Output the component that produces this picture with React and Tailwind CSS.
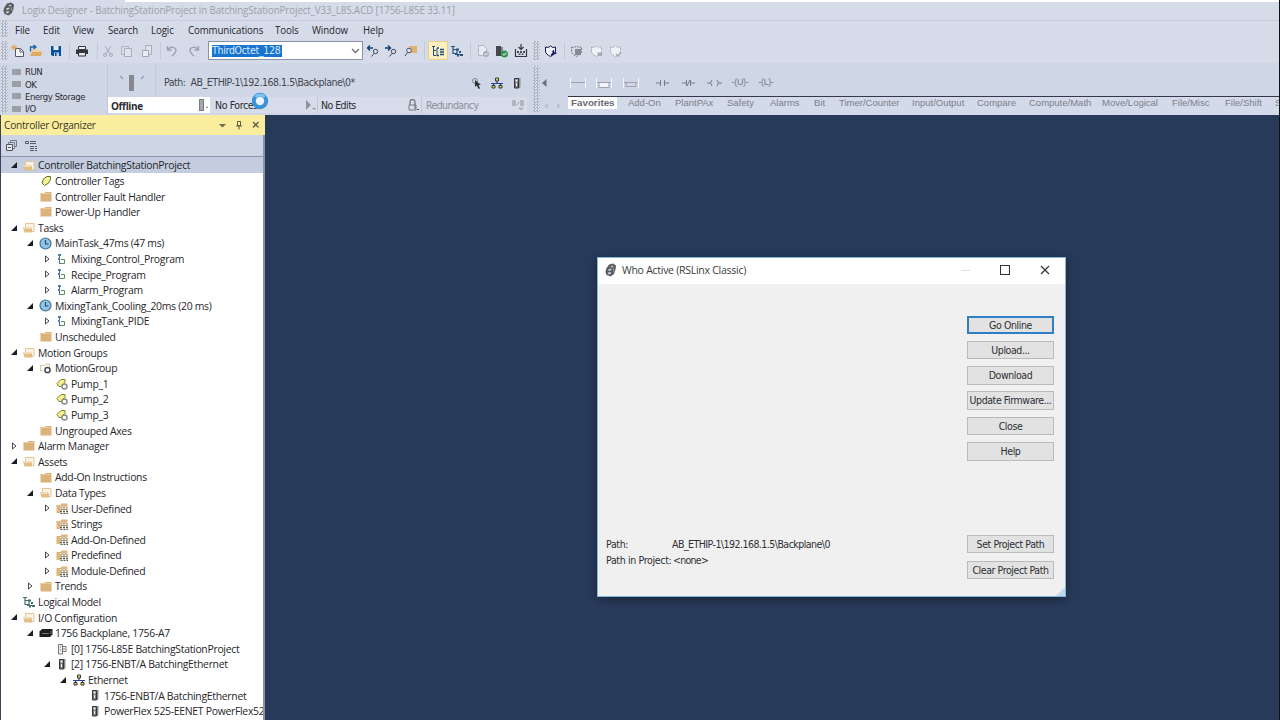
// App.jsx
import React from 'react';

const Svg = ({ w = 14, h = 14, children, className = '' }) => (
  <svg width={w} height={h} viewBox={`0 0 ${w} ${h}`} fill="none" className={`shrink-0 ${className}`}>{children}</svg>
);

// ---- toolbar icons ----
const NewIcon = () => (
  <Svg><path d="M4.500 4.500h5l3 3v5h-8z" fill="#f4f6fa" stroke="#555b66" /><path d="M9 4.500v3.500h3.500" stroke="#555b66" /><path d="M3 .5v6M0 3.500h6M1 1.500l4 4M5 1.500l-4 4" stroke="#e2a54e" /></Svg>
);
const OpenIcon = () => (
  <Svg><path d="M3 5h4l1 1h4v6H3z" fill="#f0cf9c" /><path d="M1 12l2-4h10l-1 4z" fill="#dfa962" /><path d="M1.500 7.500V3h5M4.500 1l2.500 2-2.500 2" stroke="#1d5fa5" strokeWidth="1.300" /></Svg>
);
const SaveIcon = () => (
  <Svg><path d="M2 2h10v10H3.500L2 10.500z" fill="#0b4f96" /><path d="M4.500 2h5v4h-5z" fill="#e4eaf5" /><path d="M5 8.500h5V12H5z" fill="#bfd0e6" /><path d="M6 9h1.500v3H6z" fill="#0b4f96" /></Svg>
);
const PrintIcon = () => (
  <Svg><path d="M3.500 2.500h7v3h-7z" fill="#eef" stroke="#333" /><path d="M1 5.500h12V10H1z" fill="#30343c" /><path d="M3.500 8.500h7v3.500h-7z" fill="#dfe3ec" stroke="#333" /></Svg>
);
const CutIcon = () => (
  <Svg><path d="M4 2l5 8M10 2L5 10" stroke="#a6abb8" /><circle cx="4" cy="11" r="1.500" stroke="#a6abb8" /><circle cx="10" cy="11" r="1.500" stroke="#a6abb8" /></Svg>
);
const CopyIcon = () => (
  <Svg><path d="M1.500 2.500h7v8h-7z" stroke="#b0b5c2" /><path d="M4.500 4.500h7v8h-7z" fill="#dfe3ed" stroke="#a9aebb" /></Svg>
);
const PasteIcon = () => (
  <Svg><path d="M5.500 1.500h6v9h-6z" fill="#dde1ec" stroke="#a9aebb" /><path d="M2.500 6.500h6v6h-6z" fill="#e9ecf4" stroke="#a0a5b2" /></Svg>
);
const UndoIcon = ({ flip }) => (
  <Svg className={flip ? '-scale-x-100' : ''}><path d="M2.500 2v4h4M3 5.500C5.500 2 11 3 11 6.500c0 2.500-2 3.500-4 5.500" stroke="#9da2b1" strokeWidth="1.400" /></Svg>
);
const FindIcon = ({ next }) => (
  <Svg w={12}><path d={next ? 'M0 4h5M3 1.500L5.500 4 3 6.500' : 'M6 4H1M3 1.500L.5 4 3 6.500'} stroke="#10406f" strokeWidth="1.400" /><circle cx="8.500" cy="7.500" r="2.200" stroke="#3b4756" /><path d="M7 9.500l-2.500 3" stroke="#3b4756" /></Svg>
);
const FindAllIcon = () => (
  <Svg><path d="M5 2h8v7H5z" fill="#e3b06f" /><circle cx="5" cy="6.500" r="2.300" fill="#dde2ee" stroke="#43566f" /><path d="M3.500 8.500L1 12" stroke="#43566f" /></Svg>
);
const OrganizerIcon = () => (
  <Svg><path d="M1 2.500h3M2.500 2.500v9H5M2.500 6.500H5M6 4v8" stroke="#1d4f7c" /><path d="M6 4h2M6 11.500h2M9 5.500h4M9 8h4M9 10.500h4" stroke="#1d4f7c" strokeWidth="1.300" /></Svg>
);
const TreeIcon = ({ color = '#28517d' }) => (
  <Svg w={12} h={12}><path d="M0 1.500h4M2 1.500v7h3M2 4.500h4M6 4.500v5h4" stroke={color} strokeWidth="1.200" /><path d="M5 3.500h3v2H5zM4 8h2v2H4zM8 6h2v2H8zM9 9h3v2H9zM6 10h2v1.500H6z" fill={color} /></Svg>
);
const VerifyIcon = () => (
  <Svg><path d="M2.500 1.500h5l3 3v7h-8z" fill="#e8ebf3" stroke="#b2b7c3" /><circle cx="10" cy="10" r="3" fill="#a8aeb8" /><path d="M8.500 10l1 1 2-2.200" stroke="#fff" /></Svg>
);
const VerifyCtlIcon = () => (
  <Svg><path d="M1 2h5v10H1z" fill="#41474a" /><path d="M6 3h2v9H6z" fill="#7d8784" /><circle cx="9.500" cy="10" r="3.500" fill="#2f9550" /><path d="M7.800 10l1.200 1.300 2.300-2.500" stroke="#fff" /></Svg>
);
const BuildIcon = () => (
  <Svg><path d="M1.500 5v7.500h11V5" stroke="#333842" strokeWidth="1.200" /><path d="M7 0v5M4.500 3L7 5.500 9.500 3" stroke="#333842" strokeWidth="1.200" /><path d="M3 7h2v2H3zM6 7h2v2H6zM9 7h2v2H9zM4.500 9.500h2v1.500h-2zM7.500 9.500h2v1.500h-2z" fill="#4b515b" /></Svg>
);
const ShieldIcon = ({ stroke, fill = '#eef1f8', badge }) => (
  <Svg><path d="M1.500 3L4 3.500 6.500 2 9 3.500 11.500 3v4c0 3-2.500 4-5 5.500C4 11 1.500 10 1.500 7z" fill={fill} stroke={stroke} strokeDasharray={badge === 'key' ? undefined : '2 1'} />
    {badge === 'key' && <path d="M7 11.500l3-3M10 6.500a1.500 1.500 0 102 2" stroke="#11136a" strokeWidth="1.700" />}
    {badge === 'paste' && <path d="M5 5h6v6H5z" fill="#858a95" />}
    {badge === 'lock' && <path d="M7.500 8.500h4.500V12H7.500z" fill="#a6abb5" />}
    {badge === 'check' && <path d="M7 10l2 2 3-4" stroke="#a6abb7" strokeWidth="1.500" />}
  </Svg>
);
const NetIcon = () => (
  <Svg w={12} h={12}><path d="M6 4v3M0 6.500h12M2.500 6.500V9M9.500 6.500V9" stroke="#2e3f92" strokeWidth="1.200" /><path d="M4.500 1h3v3h-3zM1 8.500h3v2.500H1zM8 8.500h3v2.500H8z" fill="#d8cf61" stroke="#373a2f" /></Svg>
);
const WhoIcon = () => (
  <Svg w={12} h={12}><circle cx="4" cy="4" r="2.500" stroke="#80858f" /><path d="M4 3v7l1.800-1.500L7.500 12l1.500-.8L7.500 8H10z" fill="#2c3038" /></Svg>
);
const ModuleIcon = () => (
  <Svg w={8} h={12}><path d="M1.500 1.500h4v9.500h-4z" fill="#75797e" stroke="#303337" /><path d="M6 1h1.500v9L6 11.500z" fill="#8a8e93" /><path d="M2.500 2.500h2v2h-2zM3 6h1v3H3z" fill="#f1f2f4" /></Svg>
);
const RoundLogo = () => (
  <Svg w={13} h={14}><path d="M2 6l3-4.500 4-1 3 2-.5 4L10 11l-3.500 2.500L2.500 12 1.500 9z" fill="#5b5d60" /><path d="M6.500 3.500l2-1 1 1-2 1zM4 6.500l3-1 .5 1.500L5 8zM4 9.500l3-.5-.5 2-2 .5z" fill="#d5d7da" /><path d="M9 5l1 4" stroke="#9b9ea3" /></Svg>
);

// ---- tree icons ----
const Folder = () => <Svg w={12} h={11}><path d="M.5 2h4l1-1h6v9.500H.5z" fill="#dbb27a" /><path d="M.5 2.500h11" stroke="#eccb9b" /></Svg>;
const FolderOpen = () => (
  <Svg w={12} h={11}><path d="M2.500 1.500h8.500v8h-8.500z" fill="#fbf4e6" stroke="#e5c596" /><path d="M0 5h7l2 1.500V10.500H1.500z" fill="#e3bd85" /><path d="M0 5h7l1 2H1z" fill="#f1dab4" /></Svg>
);
const TagIcon = () => <Svg w={12} h={12}><path d="M2 8l1.500-4L7 1.500h3.500v3L8 8.500 4.500 10.500z" fill="#f3f49a" stroke="#6c7126" /></Svg>;
const AxisTag = () => (
  <Svg w={13} h={12}><path d="M1 5.500l4-4h4v3L5.500 8.500H3z" fill="#f5f08a" stroke="#85812b" /><circle cx="8.500" cy="8.500" r="2.500" fill="#fff" stroke="#85888e" strokeWidth="1.400" /></Svg>
);
const GroupIcon = () => (
  <Svg w={13} h={12}><path d="M1.500 3.500h4l1-1.500h4v3M1.500 3.500v5H4" fill="#fcf7ec" stroke="#dcc39b" /><circle cx="8.500" cy="8" r="2.600" fill="#fff" stroke="#45484d" strokeWidth="1.500" /></Svg>
);
const ClockIcon = () => (
  <Svg w={13} h={13}><circle cx="6.500" cy="6.500" r="5.500" fill="#8cc5e8" stroke="#4a6f8c" strokeWidth="1.200" /><path d="M6.500 3v4h3" stroke="#264f72" strokeWidth="1.200" /></Svg>
);
const ProgramIcon = () => (
  <Svg w={12} h={12}><path d="M3.500 1v9.500H8" stroke="#466a8e" /><path d="M2 1h3v2H2zM2 5h2v2H2z" fill="#4e7fae" /><path d="M5 6.500h3.500v4H5" stroke="#5a9060" /></Svg>
);
const TypeIcon = () => (
  <Svg w={12} h={12}><path d="M.5 3h4l1-1.500h6V4H4v7H.5z" fill="#e0b57d" /><path d="M4.500 5h7M4.500 7.500h7M5 5v6M8 5v6M11 5v6" stroke="#a58c6a" /><path d="M4 9.500h8M4.500 11.500h7.500" stroke="#555a60" strokeDasharray="2 1" /></Svg>
);
const BackplaneIcon = () => <Svg w={14} h={10}><path d="M3 1h10.500v5.500L11 9H.5V3.500z" fill="#1d1e20" /><path d="M3 5.500h7M12 3v3" stroke="#777" /></Svg>;
const ControllerIcon = () => <Svg w={12} h={12}><path d="M2.500 1.500h4v9.500h-4z" fill="#eee" stroke="#777" /><path d="M6.500 3.500h3.500v5H6.500M4 4h1M4 7h1M8 5v2" stroke="#777" /></Svg>;

const icons = {
  folder: Folder, open: FolderOpen, tag: TagIcon, axis: AxisTag, group: GroupIcon, clock: ClockIcon, program: ProgramIcon,
  type: TypeIcon, backplane: BackplaneIcon, controller: ControllerIcon, module: ModuleIcon, net: NetIcon,
  model: () => <TreeIcon color="#3c6f6f" />,
};

// [level, expander, icon, label]
const tree = [
  [0, 'v', 'open', 'Controller BatchingStationProject'],
  [1, '', 'tag', 'Controller Tags'],
  [1, '', 'folder', 'Controller Fault Handler'],
  [1, '', 'folder', 'Power-Up Handler'],
  [0, 'v', 'open', 'Tasks'],
  [1, 'v', 'clock', 'MainTask_47ms (47 ms)'],
  [2, '>', 'program', 'Mixing_Control_Program'],
  [2, '>', 'program', 'Recipe_Program'],
  [2, '>', 'program', 'Alarm_Program'],
  [1, 'v', 'clock', 'MixingTank_Cooling_20ms (20 ms)'],
  [2, '>', 'program', 'MixingTank_PIDE'],
  [1, '', 'folder', 'Unscheduled'],
  [0, 'v', 'open', 'Motion Groups'],
  [1, 'v', 'group', 'MotionGroup'],
  [2, '', 'axis', 'Pump_1'],
  [2, '', 'axis', 'Pump_2'],
  [2, '', 'axis', 'Pump_3'],
  [1, '', 'folder', 'Ungrouped Axes'],
  [0, '>', 'folder', 'Alarm Manager'],
  [0, 'v', 'open', 'Assets'],
  [1, '', 'folder', 'Add-On Instructions'],
  [1, 'v', 'open', 'Data Types'],
  [2, '>', 'type', 'User-Defined'],
  [2, '', 'type', 'Strings'],
  [2, '', 'type', 'Add-On-Defined'],
  [2, '>', 'type', 'Predefined'],
  [2, '>', 'type', 'Module-Defined'],
  [1, '>', 'folder', 'Trends'],
  [0, '', 'model', 'Logical Model'],
  [0, 'v', 'open', 'I/O Configuration'],
  [1, 'v', 'backplane', '1756 Backplane, 1756-A7'],
  [2, '', 'controller', '[0] 1756-L85E BatchingStationProject'],
  [2, 'v', 'module', '[2] 1756-ENBT/A BatchingEthernet'],
  [3, 'v', 'net', 'Ethernet'],
  [4, '', 'module', '1756-ENBT/A BatchingEthernet'],
  [4, '', 'module', 'PowerFlex 525-EENET PowerFlex525'],
];
const indents = ['pl-[7px]', 'pl-[23.500px]', 'pl-[40px]', 'pl-[56.500px]', 'pl-[73px]'];

function TreeRow({ row, selected }) {
  const [level, arrow, icon, label] = row;
  const Icon = icons[icon];
  return (
    <div className={`flex h-[15.6px] shrink-0 items-center ${indents[level]} ${selected ? 'bg-[#c3cddf]' : ''}`}>
      <span className="flex w-[11px] shrink-0 justify-center">
        {arrow === 'v' && <Svg w={6} h={6}><path d="M6 0v6H0z" fill="#1c1c24" /></Svg>}
        {arrow === '>' && <Svg w={6} h={8}><path d="M1.500 1v6L5 4z" stroke="#444852" fill="#fff" /></Svg>}
      </span>
      <span className="ml-[3px] flex w-[14px] shrink-0 justify-center"><Icon /></span>
      <span className="ml-[2px] inline-block origin-left scale-x-[0.905] whitespace-pre text-[11.5px] leading-none tracking-[-0.32px] text-[#26262b]">{label}</span>
    </div>
  );
}

const menu = [
  ['File', 'w-[28.500px]'], ['Edit', 'w-[30px]'], ['View', 'w-[35px]'], ['Search', 'w-[42.500px]'], ['Logic', 'w-[37px]'],
  ['Communications', 'w-[87px]'], ['Tools', 'w-[37px]'], ['Window', 'w-[51px]'], ['Help', 'w-[30px]'],
];

const tabs = [
  ['Add-On', 'w-[47px]'], ['PlantPAx', 'w-[52px]'], ['Safety', 'w-[43px]'], ['Alarms', 'w-[44px]'], ['Bit', 'w-[25px]'],
  ['Timer/Counter', 'w-[73px]'], ['Input/Output', 'w-[65px]'], ['Compare', 'w-[52px]'], ['Compute/Math', 'w-[73px]'],
  ['Move/Logical', 'w-[70px]'], ['File/Misc', 'w-[53px]'], ['File/Shift', 'w-[50px]'], ['Sequencer', 'w-[50px]'],
];

const Grip = ({ className }) => (
  <div className={`w-[7px] shrink-0 bg-[conic-gradient(#a5abba_25%,#dce1ec_0_50%,#a5abba_0_75%,#dce1ec_0)] bg-[length:3px_3px] opacity-80 ${className}`} />
);
const Slot = ({ w, children }) => <span className={`flex h-full shrink-0 items-center justify-center ${w}`}>{children}</span>;
const Sep = ({ w }) => <Slot w={w}><span className="h-[18px] w-px shrink-0 bg-[#c3c9d7]" /></Slot>;

function Toolbar() {
  return (
    <div className="flex h-6 items-center pb-px pl-px">
      <Grip className="h-[19px]" />
      <span className="w-px shrink-0" />
      <Slot w="w-[18px]"><NewIcon /></Slot>
      <Slot w="w-[18px]"><OpenIcon /></Slot>
      <Slot w="w-[22px]"><SaveIcon /></Slot>
      <Sep w="w-[4px]" />
      <Slot w="w-[22px]"><PrintIcon /></Slot>
      <Sep w="w-[8px]" />
      <Slot w="w-[14px]"><CutIcon /></Slot>
      <Slot w="w-[24px]"><CopyIcon /></Slot>
      <Slot w="w-[16px]"><PasteIcon /></Slot>
      <Sep w="w-[10px]" />
      <Slot w="w-[14px]"><UndoIcon /></Slot>
      <Slot w="w-[29px]"><UndoIcon flip /></Slot>
      <div className="flex h-[19px] w-[155px] shrink-0 items-center border border-[#8d94a5] bg-white pl-[3px] pr-[2px]">
        <span className="h-[12px] w-[70px] bg-[#1874cd] font-['DejaVu_Sans_Condensed'] text-[10.5px] leading-[11px] tracking-[-0.3px] text-[#d7eafc]">ThirdOctet_128</span>
        <Svg w={9} h={6} className="ml-auto"><path d="M1 1l3.500 3.500L8 1" stroke="#6b6f78" strokeWidth="1.300" /></Svg>
      </div>
      <Slot w="w-[20px]"><FindIcon /></Slot>
      <Slot w="w-[16px]"><FindIcon next /></Slot>
      <Slot w="w-[24px]"><FindAllIcon /></Slot>
      <Sep w="w-[3px]" />
      <Slot w="w-[24px]"><span className="flex h-[19px] w-5 items-center justify-center border border-[#e8cf8c] bg-[#fdf1c4]"><OrganizerIcon /></span></Slot>
      <Slot w="w-[14px]"><TreeIcon /></Slot>
      <Sep w="w-[12px]" />
      <Slot w="w-[13px]"><VerifyIcon /></Slot>
      <Slot w="w-[26px]"><VerifyCtlIcon /></Slot>
      <Slot w="w-[12px]"><BuildIcon /></Slot>
      <Grip className="ml-[6px] h-[19px]" />
      <Slot w="w-[21px]"><ShieldIcon stroke="#181b50" badge="key" /></Slot>
      <Sep w="w-[6px]" />
      <Slot w="w-[20px]"><ShieldIcon stroke="#767b87" fill="#d5d9e2" badge="paste" /></Slot>
      <Slot w="w-[20px]"><ShieldIcon stroke="#a3a8b4" badge="lock" /></Slot>
      <Slot w="w-[18px]"><ShieldIcon stroke="#a9aeba" badge="check" /></Slot>
    </div>
  );
}

function OnlineBar() {
  return (
    <div className="flex w-[532px] shrink-0 pl-px font-['DejaVu_Sans_Condensed'] text-[#2b2c33]">
      <Grip className="mt-0.5 h-[47px]" />
      <div className="flex w-[99px] shrink-0 flex-col pl-[4px] pt-[2px]">
        {['RUN', 'OK', 'Energy Storage', 'I/O'].map(s => (
          <div key={s} className="flex h-[12.2px] items-center gap-1">
            <span className="h-[6px] w-[9px] bg-[#9b9fa6]" />
            <span className="whitespace-nowrap text-[9.5px] leading-none tracking-[-0.42px]">{s}</span>
          </div>
        ))}
      </div>
      <div className="flex min-w-0 flex-1 flex-col border-l border-[#c1c7d6]">
        <div className="flex h-[33px] items-center">
          <div className="flex h-full w-[48px] items-center justify-center border-r border-[#c5cbd9] pt-[4px]">
            <Svg w={26} h={18}><path d="M1 2l3 3M25 2l-3 3" stroke="#9196a3" strokeWidth="1.300" /><path d="M10 1h5v16h-5z" fill="#85888f" /></Svg>
          </div>
          <span className="ml-[8px] whitespace-pre pt-[3px] text-[10.5px] leading-none tracking-[-0.47px] text-[#44464e]">Path:  AB_ETHIP-1\192.168.1.5\Backplane\0*</span>
          <div className="ml-auto flex items-center pt-[4px] pr-[5px]">
            <Slot w="w-[20px]"><WhoIcon /></Slot>
            <Slot w="w-[20px]"><NetIcon /></Slot>
            <Slot w="w-[20px]"><ModuleIcon /></Slot>
          </div>
        </div>
        <div className="flex h-[16px] text-[10.5px] leading-none tracking-[-0.4px]">
          <div className="flex w-[102px] items-center bg-white pl-[3px] pr-[2px]">
            <b className="origin-left scale-x-[0.91] font-['Open_Sans'] text-[11px]">Offline</b>
            <span className="ml-auto h-[12px] w-[5px] border border-[#777b84] bg-[#a3a6ad]" />
            <span className="ml-[2px] text-[10px]">.</span>
          </div>
          <div className="flex w-[107px] items-center bg-[#d6dcea] pl-[5px]">
            <span>No Forces</span>
            <Svg w={12} h={11} className="ml-auto"><path d="M1 0l5 5-5 5z" fill="#8d929e" /><path d="M7 8h4l-2 2z" fill="#8d929e" /></Svg>
          </div>
          <div className="flex w-[104px] items-center border-l border-[#c0c6d4] bg-[#d6dcea] pl-[3px] pr-[2px]">
            <span className="tracking-[-0.55px]">No Edits</span>
            <Svg w={11} h={12} className="ml-auto"><path d="M2 6V3a2.500 2.500 0 015 0v7" stroke="#777b80" strokeWidth="1.300" /><path d="M1 6h7v5H1z" stroke="#777b80" /><path d="M9 10h2v1H9z" fill="#555" /></Svg>
          </div>
          <div className="flex w-[106px] items-center border-l border-[#c0c6d4] bg-[#d6dcea] pl-[4px] pr-[2px] text-[#8b909c]">
            <span className="tracking-[-0.6px]">Redundancy</span>
            <Svg w={13} h={12} className="ml-auto"><path d="M1 1v6M3 1v6M9 1v6M11 1v6" stroke="#a0a4ae" strokeWidth="1.400" /><path d="M5 6l2-3M7 9h4l-2 2z" stroke="#a0a4ae" /></Svg>
          </div>
        </div>
      </div>
    </div>
  );
}

const Rung = ({ children }) => <Svg w={16} h={12}><path d="M.5 1v10M15.500 1v10" stroke="#f5f7fb" /><path d="M1 5.500h14" stroke="#9da2ad" />{children}</Svg>;
const Element = ({ children }) => <span className="whitespace-nowrap font-['Liberation_Sans'] text-[9px] leading-none tracking-[-0.3px] text-[#767b86]">{children}</span>;

function InstructionBar() {
  return (
    <div className="flex min-w-0 flex-1">
      <Grip className="mt-0.5 ml-px h-[47px]" />
      <div className="flex min-w-0 flex-1 flex-col">
        <div className="flex h-[32px] items-center pt-[5px]">
          <Svg w={5} h={8} className="ml-[2px]"><path d="M4.500 0v8L0 4z" fill="#6d717b" /></Svg>
          <span className="w-[17px]" />
          <Slot w="w-[27px]"><Rung /></Slot>
          <Slot w="w-[26px]"><Rung><path d="M3 5.500h10v5H3z" fill="#f2f4f9" stroke="#9da2ad" /></Rung></Slot>
          <Slot w="w-[27px]"><Rung><path d="M3 5.500v4h10v-4" stroke="#9da2ad" /></Rung></Slot>
          <span className="w-[5px]" />
          <Slot w="w-[26px]"><Svg w={13} h={8}><path d="M0 4h4M4.500 1v6M8.500 1v6M9 4h4" stroke="#767b86" /></Svg></Slot>
          <Slot w="w-[26px]"><Svg w={13} h={8}><path d="M0 4h4M4.500 1v6M8.500 1v6M9 4h4M5 7l3-6" stroke="#767b86" /></Svg></Slot>
          <Slot w="w-[26px]"><Svg w={15} h={8}><path d="M0 4h3M5 1Q2 4 5 7M10 1q3 3 0 6M12 4h3" stroke="#767b86" /></Svg></Slot>
          <Slot w="w-[26px]"><Element>-(U)-</Element></Slot>
          <Slot w="w-[26px]"><Element>-(L)-</Element></Slot>
        </div>
        <div className="flex h-[19px] text-[9.5px] font-['Liberation_Sans']">
          <div className="flex w-[28px] shrink-0 items-center gap-[9px] pl-[4px]">
            <Svg w={4} h={6}><path d="M4 0v6L0 3z" fill="#bcc1cd" /></Svg>
            <Svg w={4} h={6}><path d="M0 0v6l4-3z" fill="#bcc1cd" /></Svg>
          </div>
          <div className="flex min-w-0 flex-1 overflow-hidden whitespace-nowrap border-t border-[#34384a] bg-[#d3daea] leading-[12px] text-[#7c8089]">
            <b className="mr-[11px] h-[12px] w-[49px] shrink-0 bg-white pl-[3px] text-[9.8px] text-[#686c75]">Favorites</b>
            {tabs.map(([t, w]) => <span key={t} className={`shrink-0 ${w}`}>{t}</span>)}
          </div>
        </div>
      </div>
    </div>
  );
}

function Organizer() {
  return (
    <div className="flex w-[265px] shrink-0 flex-col overflow-hidden border-l border-[#3a4358] bg-[#fbed9e]">
      <div className="flex h-5 shrink-0 items-center pl-[3px] pr-[5px] text-[#3b3927]">
        <span className="origin-left scale-x-[0.885] text-[11.5px] leading-none tracking-[-0.3px]">Controller Organizer</span>
        <Svg w={7} h={5} className="ml-auto"><path d="M0 1h7L3.500 4.500z" fill="#6b6650" /></Svg>
        <Svg w={8} h={10} className="ml-[9px]"><path d="M2.500 1.500h3v4h-3zM1 6h6M4 6v3.500M5.500 1.500V5" stroke="#5f5b49" /></Svg>
        <Svg w={8} h={8} className="ml-[9px]"><path d="M1 1l5.500 5.500M6.500 1L1 6.500" stroke="#5f5b49" strokeWidth="1.300" /></Svg>
      </div>
      <div className="flex min-h-0 flex-1 flex-col overflow-hidden border-r-2 border-[#8b93a8] bg-white">
        <div className="flex h-[22px] shrink-0 items-center gap-[8px] border-b border-[#8f96a8] bg-[#ced5e4] pl-[5px]">
          <Svg w={11} h={11}><path d="M4.500 3V.5h6v6H8" stroke="#777c87" /><path d="M2.500 4.500v-2h6v6h-2" stroke="#777c87" /><path d="M.5 4.500h6v6h-6zM2 7.500h3" stroke="#50545e" fill="#e7eaf1" /></Svg>
          <Svg w={12} h={12}><path d="M.5 1.500h3v2h-3zM5 1.500h6M5 3.500h6M5 6.500h4M5 8.500h4M5 10.500h4M10 6.500h2M10 8.500h2M10 10.500h2" stroke="#555963" /></Svg>
        </div>
        <div className="flex flex-col pt-[0.4px]">
          {tree.map((row, i) => <TreeRow key={i} row={row} selected={i === 0} />)}
        </div>
      </div>
    </div>
  );
}

const Btn = ({ children, className = 'border border-[#b9babd]' }) => (
  <button className={`flex h-[18.6px] w-[87px] shrink-0 items-center justify-center whitespace-nowrap bg-[#e2e2e3] text-[10.5px] leading-none tracking-[-0.42px] text-[#2e2f33] ${className}`}>{children}</button>
);

function WhoActive() {
  return (
    <div className="absolute left-[597px] top-[257px] flex h-[340px] w-[469px] flex-col border border-[#7fb9e4] bg-[#f0f0f0] shadow-[0_2px_8px_rgba(0,0,0,0.4)]">
      <div className="flex h-[26px] shrink-0 items-center bg-white pb-[2px] pl-[6px] pr-[15px]">
        <RoundLogo />
        <span className="ml-[5px] origin-left scale-x-[0.915] text-[11.5px] leading-none tracking-[-0.3px] text-[#3a3b40]">Who Active (RSLinx Classic)</span>
        <span className="ml-auto h-px w-[9px] bg-[#dedede]" />
        <span className="ml-[30px] h-[10px] w-[10px] border border-[#333]" />
        <Svg w={10} h={10} className="ml-[30px]"><path d="M1 1l8 8M9 1L1 9" stroke="#333" strokeWidth="1.200" /></Svg>
      </div>
      <div className="flex flex-1 justify-between pl-[8px] pr-[11px] font-['DejaVu_Sans_Condensed']">
        <div className="mt-[252px] grid h-[32px] grid-cols-[66px_auto] text-[10.5px] leading-[16px] tracking-[-0.34px] text-[#2e2f33]">
          <span className="whitespace-nowrap">Path:</span><span className="tracking-[-0.53px]">AB_ETHIP-1\192.168.1.5\Backplane\0</span>
          <span className="whitespace-nowrap">Path in Project:</span><span className="pl-px tracking-[-0.7px]">&lt;none&gt;</span>
        </div>
        <div className="flex flex-col gap-[6.700px] pt-[31.500px]">
          <Btn className="border-2 border-[#2f7fc4]">Go Online</Btn>
          <Btn>Upload...</Btn>
          <Btn>Download</Btn>
          <Btn>Update Firmware...</Btn>
          <Btn>Close</Btn>
          <Btn>Help</Btn>
          <span className="h-[61px]" />
          <Btn>Set Project Path</Btn>
          <Btn className="mt-[0.500px] border border-[#b9babd]">Clear Project Path</Btn>
        </div>
      </div>
      <svg width="9" height="9" className="absolute bottom-0 right-0"><path d="M9 0v9H0z" fill="#c4d6ea" /></svg>
    </div>
  );
}

export default function App() {
  return (
    <div className="relative flex h-[720px] w-[1280px] flex-col overflow-hidden border-r border-[#111] bg-[#283a5a] font-['Open_Sans',sans-serif]">
      <div className="bg-[#d5dbe8]">
        <div className="flex h-[2px]"><span className="w-[125px]" /><span className="flex-1 bg-white" /></div>
        <div className="flex h-[19px] items-center border-b border-[#c5ccda] pb-[4px] pl-[2px]">
          <RoundLogo />
          <span className="ml-[7px] origin-left scale-x-[0.884] whitespace-nowrap text-[11px] leading-none tracking-[-0.1px] text-[#9a9fac]">Logix Designer - BatchingStationProject in BatchingStationProject_V33_L85.ACD [1756-L85E 33.11]</span>
        </div>
        <div className="flex h-[18px] items-center pb-[2px] pl-px text-[11px] font-medium leading-none tracking-[-0.1px] text-[#25262e]">
          <Grip className="mr-[6.500px] h-[16px]" />
          {menu.map(([m, w]) => <span key={m} className={`shrink-0 origin-left scale-x-[0.88] ${w}`}>{m}</span>)}
        </div>
        <Toolbar />
      </div>
      <div className="flex h-[52px] shrink-0 bg-[#cfd6e5] pt-px">
        <OnlineBar />
        <InstructionBar />
      </div>
      <div className="flex min-h-0 flex-1">
        <Organizer />
      </div>
      {/* busy cursor */}
      <svg width="18" height="18" className="absolute left-[251px] top-[92px]"><circle cx="9" cy="9" r="6.200" fill="#e8f3fc" stroke="#3792d8" strokeWidth="4" /><path d="M4.500 5a6.200 6.200 0 019 0" stroke="#7fc3ee" strokeWidth="3" fill="none" /></svg>
      <WhoActive />
    </div>
  );
}
